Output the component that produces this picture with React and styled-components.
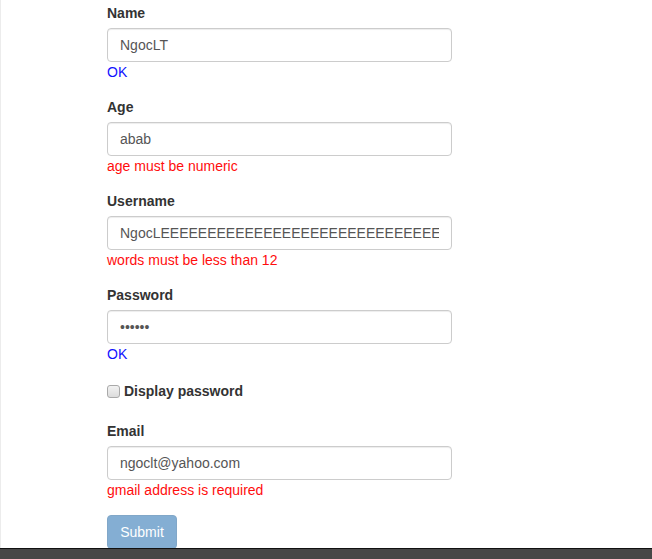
import React from "react";
import styled, { createGlobalStyle } from "styled-components";

const GlobalStyle = createGlobalStyle`
  html, body {
    margin: 0;
    padding: 0;
    background: #fff;
  }
  body {
    font-family: "Liberation Sans", Arial, Helvetica, sans-serif;
    font-size: 14px;
    line-height: 20px;
    color: #333;
  }
`;

const Page = styled.div`
  width: 652px;
  height: 559px;
  display: flex;
  flex-direction: column;
  overflow: hidden;
`;

const Main = styled.div`
  flex: 1;
  overflow: hidden;
  border-left: 1px solid #ececec;
  padding: 3px 0 0 106px;
`;

const Form = styled.form`
  width: 345px;
`;

const Group = styled.div`
  margin-bottom: 15px;
`;

const Label = styled.label`
  display: block;
  font-weight: bold;
  margin-bottom: 5px;
`;

const Input = styled.input`
  display: block;
  box-sizing: border-box;
  width: 100%;
  height: 34px;
  padding: 6px 12px;
  font-family: inherit;
  font-size: 14px;
  line-height: 20px;
  color: #555;
  background: #fff;
  border: 1px solid #ccc;
  border-radius: 4px;
  box-shadow: inset 0 1px 1px rgba(0, 0, 0, 0.075);
  outline: none;
`;

const Message = styled.span`
  display: block;
  color: ${(p) => (p.$ok ? "#1212ff" : "#ff0d0d")};
`;

const CheckRow = styled.label`
  display: flex;
  align-items: center;
  gap: 4px;
  padding-top: 2px;
  margin-bottom: 20px;
  font-weight: bold;
  line-height: 20px;
`;

const CheckBox = styled.input.attrs({ type: "checkbox" })`
  appearance: none;
  box-sizing: border-box;
  width: 13px;
  height: 13px;
  margin: 0;
  border: 1px solid #a9a9a9;
  border-radius: 3px;
  background: linear-gradient(#f2f2f2, #dcdcdc);

  &:checked {
    background: #337ab7;
    border-color: #2e6da4;
  }
`;

const SubmitButton = styled.button`
  width: 70px;
  height: 34px;
  padding: 6px 12px;
  font-family: inherit;
  font-size: 14px;
  color: #fff;
  background: #337ab7;
  border: 1px solid #2e6da4;
  border-radius: 4px;
  opacity: 0.6;
  cursor: not-allowed;
`;

const Footer = styled.div`
  height: 10px;
  flex-shrink: 0;
  border-top: 1px solid #111;
  background: #474747;
`;

const fields = [
  { label: "Name", type: "text", value: "NgocLT", msg: "OK", ok: true },
  { label: "Age", type: "text", value: "abab", msg: "age must be numeric" },
  {
    label: "Username",
    type: "text",
    value: "NgocLEEEEEEEEEEEEEEEEEEEEEEEEEEEEEEEEEEE",
    msg: "words must be less than 12",
  },
  { label: "Password", type: "password", value: "123456", msg: "OK", ok: true },
];

const Field = ({ label, type, value, msg, ok }) => (
  <Group>
    <Label>{label}</Label>
    <Input type={type} defaultValue={value} />
    <Message $ok={ok}>{msg}</Message>
  </Group>
);

export default function App() {
  return (
    <Page>
      <GlobalStyle />
      <Main>
        <Form onSubmit={(e) => e.preventDefault()}>
          {fields.map((f) => (
            <Field key={f.label} {...f} />
          ))}
          <CheckRow>
            <CheckBox />
            Display password
          </CheckRow>
          <Field
            label="Email"
            type="text"
            value="ngoclt@yahoo.com"
            msg="gmail address is required"
          />
          <SubmitButton type="submit" disabled>
            Submit
          </SubmitButton>
        </Form>
      </Main>
      <Footer />
    </Page>
  );
}
